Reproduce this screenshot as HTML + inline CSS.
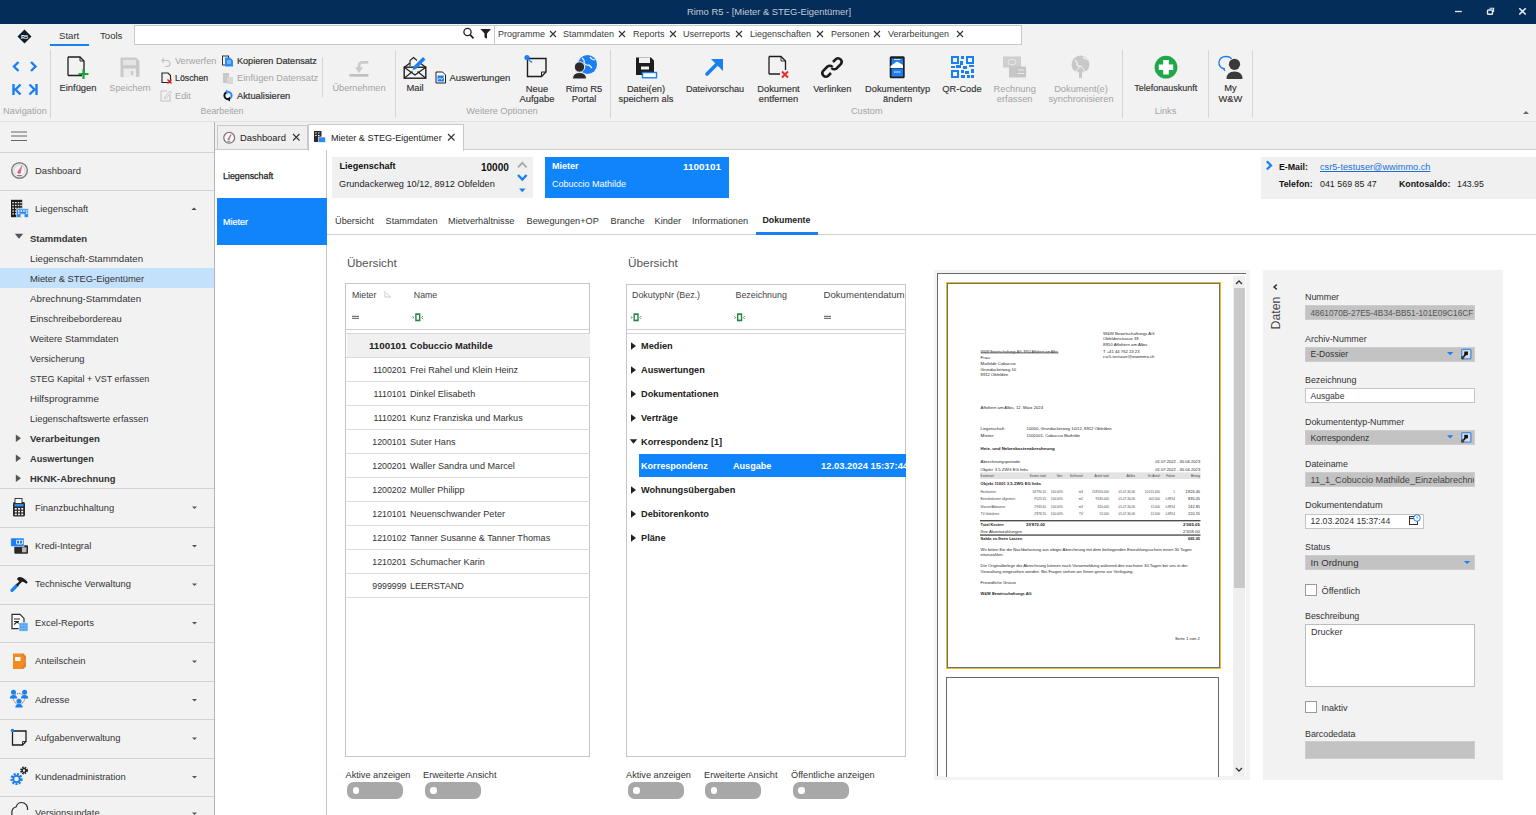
<!DOCTYPE html>
<html><head><meta charset="utf-8">
<style>
html,body{margin:0;padding:0;width:1536px;height:815px;overflow:hidden;background:#fff;}
body{font-family:"Liberation Sans",sans-serif;font-size:9.4px;color:#262626;position:relative;}
.a{position:absolute;}
.t{position:absolute;white-space:nowrap;line-height:12px;}
.b{font-weight:bold;}
.c{transform:translateX(-50%);text-align:center;}
.g{color:#a3a3a3;}
.vs{position:absolute;width:1px;background:#d6d6d6;}
.hs{position:absolute;height:1px;background:#d6d6d6;}
svg{position:absolute;overflow:visible;}
</style></head><body>
<!-- TITLE BAR -->
<div class="a" style="left:0;top:0;width:1536px;height:24px;background:#042d5a;"></div>
<div class="t" style="left:769px;top:6px;color:#c3cbd6;font-size:9.4px;transform:translateX(-50%);">Rimo R5 - [Mieter &amp; STEG-Eigentümer]</div>
<svg style="left:0;top:0" width="1" height="1">
 <line x1="1455" y1="11.5" x2="1461.8" y2="11.5" stroke="#e6eaf0" stroke-width="1.3"/>
 <rect x="1487.5" y="10" width="5" height="4.3" rx="0.8" fill="none" stroke="#e6eaf0" stroke-width="1.4"/>
 <path d="M1489.5 8.3 H1493.6 V12" fill="none" stroke="#e6eaf0" stroke-width="1.1"/>
 <path d="M1519.3 8.2 L1525.7 14.5 M1525.7 8.2 L1519.3 14.5" stroke="#eef1f5" stroke-width="1.6"/>
</svg>

<!-- RIBBON -->
<div class="a" style="left:0;top:24px;width:1536px;height:98px;background:#f2f2f2;"></div>
<div class="hs" style="left:0;top:121px;width:1536px;background:#e3e3e3;"></div>
<!-- logo -->
<svg style="left:17px;top:29px" width="15" height="15">
 <path d="M7.5 0.5 L14.5 7.5 L7.5 14.5 L0.5 7.5 Z" fill="#0d1b2a"/>
 <text x="7.5" y="10" font-family="Liberation Sans" font-size="5.6" font-weight="bold" fill="#fff" text-anchor="middle">R5</text>
</svg>
<div class="t" style="left:59px;top:30px;font-size:9.6px;color:#333;">Start</div>
<div class="a" style="left:50px;top:44px;width:39px;height:2px;background:#1a7ff0;"></div>
<div class="t" style="left:100px;top:30px;font-size:9.6px;color:#333;">Tools</div>
<!-- search box -->
<div class="a" style="left:134px;top:24.5px;width:888px;height:20.3px;background:#fff;border:1px solid #c9c9c9;box-sizing:border-box;"></div>
<svg style="left:462px;top:27px" width="40" height="14">
 <circle cx="5.5" cy="5" r="3.6" fill="none" stroke="#222" stroke-width="1.3"/>
 <path d="M8 7.7 L11.5 11.3" stroke="#222" stroke-width="1.8"/>
 <path d="M18.5 2 H29 L25 6.5 V11.5 L22.5 10.5 V6.5 Z" fill="#222"/>
 <line x1="32.5" y1="-2" x2="32.5" y2="17" stroke="#c9c9c9" stroke-width="1"/>
</svg>
<div class="t" style="left:498px;top:28px;font-size:9px;color:#3a3a3a;word-spacing:0;">Programme</div>
<div class="t" style="left:563px;top:28px;font-size:9px;color:#3a3a3a;">Stammdaten</div>
<div class="t" style="left:633px;top:28px;font-size:9px;color:#3a3a3a;">Reports</div>
<div class="t" style="left:683px;top:28px;font-size:9px;color:#3a3a3a;">Userreports</div>
<div class="t" style="left:750px;top:28px;font-size:9px;color:#3a3a3a;">Liegenschaften</div>
<div class="t" style="left:831px;top:28px;font-size:9px;color:#3a3a3a;">Personen</div>
<div class="t" style="left:888px;top:28px;font-size:9px;color:#3a3a3a;">Verarbeitungen</div>
<svg style="left:0;top:0" width="1" height="1">
 <g stroke="#333" stroke-width="1.1">
  <path d="M550 31 L556 37 M556 31 L550 37"/>
  <path d="M619 31 L625 37 M625 31 L619 37"/>
  <path d="M670 31 L676 37 M676 31 L670 37"/>
  <path d="M736 31 L742 37 M742 31 L736 37"/>
  <path d="M817 31 L823 37 M823 31 L817 37"/>
  <path d="M874 31 L880 37 M880 31 L874 37"/>
  <path d="M957 31 L963 37 M963 31 L957 37"/>
 </g>
</svg>

<!-- separators -->
<div class="vs" style="left:50px;top:50px;height:68px;"></div>
<div class="vs" style="left:322px;top:57px;height:40px;"></div>
<div class="vs" style="left:395px;top:50px;height:68px;"></div>
<div class="vs" style="left:610px;top:50px;height:68px;"></div>
<div class="vs" style="left:1122px;top:50px;height:68px;"></div>
<div class="vs" style="left:1208px;top:50px;height:68px;"></div>
<div class="vs" style="left:1252px;top:50px;height:68px;"></div>

<!-- Navigation -->
<svg style="left:0;top:0" width="1" height="1">
 <g fill="none" stroke="#1a7ff0" stroke-width="2.4" stroke-linejoin="miter">
  <path d="M18.5 62 L14 66.5 L18.5 71"/>
  <path d="M31 62 L35.5 66.5 L31 71"/>
  <path d="M13.5 84 V95 M20.5 84.5 L15.5 89.5 L20.5 94.5"/>
  <path d="M36.5 84 V95 M29.5 84.5 L34.5 89.5 L29.5 94.5"/>
 </g>
</svg>
<div class="t g" style="left:25px;top:105px;font-size:9.3px;transform:translateX(-50%);">Navigation</div>

<!-- Einfügen / Speichern -->
<svg style="left:0;top:0" width="1" height="1">
 <path d="M68 57 H80 L84 61 V74 M82 75.5 H68 Z" fill="none" stroke="#1e1e1e" stroke-width="1.3"/>
 <path d="M68 57 V75.5" stroke="#1e1e1e" stroke-width="1.3"/>
 <path d="M80 57 V61 H84" fill="none" stroke="#1e1e1e" stroke-width="1"/>
 <path d="M83.5 69 V79 M78.5 74 H88.5" stroke="#1ea03a" stroke-width="2.2"/>
 <path d="M120.5 57.5 H136 L139.5 61 V77 H120.5 Z" fill="#c9c9c9"/>
 <rect x="123" y="59.8" width="13" height="5.5" fill="#e4e4e4"/>
 <rect x="123.5" y="68.5" width="12.5" height="8.5" fill="#ececec"/>
 <rect x="131" y="71" width="2.2" height="4" fill="#c9c9c9"/>
</svg>
<div class="t" style="left:78px;top:82px;font-size:9.4px;color:#333;-webkit-text-stroke:0.15px #333;transform:translateX(-50%);">Einfügen</div>
<div class="t g" style="left:130px;top:82px;font-size:9.2px;transform:translateX(-50%);">Speichern</div>

<!-- small buttons -->
<svg style="left:0;top:0" width="1" height="1">
 <path d="M164 58 L162 60.5 L164 63 M162 60.5 H167 A3 3 0 0 1 167 66.5 H165" fill="none" stroke="#c0c0c0" stroke-width="1.1"/>
 <path d="M162 73 H168 L170.5 75.5 V82.5 H162 Z" fill="none" stroke="#222" stroke-width="1.1"/>
 <path d="M167.5 79.5 L171.5 83.5 M171.5 79.5 L167.5 83.5" stroke="#e02020" stroke-width="1.4"/>
 <path d="M161 91 H167 M161 91 V101 H170 V95" fill="none" stroke="#c6c6c6" stroke-width="1.1"/>
 <path d="M164 98 L170 91 L171.5 92.5 L165.5 99 Z" fill="none" stroke="#c6c6c6" stroke-width="1"/>
 <rect x="222.5" y="56" width="6" height="9" fill="none" stroke="#333" stroke-width="1"/>
 <path d="M225 57.5 H230 L233 60.5 V66.5 H225 Z" fill="#2a8cf0"/>
 <path d="M227 61 H231 M227 63 H231" stroke="#fff" stroke-width="0.7"/>
 <rect x="223" y="73" width="6" height="10" fill="#c8c8c8"/>
 <rect x="227" y="77" width="6" height="7" fill="#d8d8d8"/>
 <path d="M228 92 A3.6 3.6 0 0 1 228 99.2" fill="none" stroke="#2a8cf0" stroke-width="2"/>
 <path d="M228 99.2 A3.6 3.6 0 0 1 228 92" fill="none" stroke="#111" stroke-width="2"/>
 <path d="M226 89.6 L229.5 92 L226 94.4 Z" fill="#2a8cf0"/>
 <path d="M230 96.8 L226.5 99.2 L230 101.6 Z" fill="#111"/>
</svg>
<div class="t g" style="left:175px;top:54.5px;font-size:9.2px;">Verwerfen</div>
<div class="t" style="left:175px;top:72px;font-size:8.8px;color:#333;-webkit-text-stroke:0.2px #333;">Löschen</div>
<div class="t g" style="left:175px;top:89.5px;font-size:9.2px;">Edit</div>
<div class="t" style="left:237px;top:54.5px;font-size:9.1px;color:#333;-webkit-text-stroke:0.2px #333;">Kopieren Datensatz</div>
<div class="t g" style="left:237px;top:72px;font-size:9.3px;">Einfügen Datensatz</div>
<div class="t" style="left:237px;top:89.5px;font-size:9.3px;color:#333;-webkit-text-stroke:0.2px #333;">Aktualisieren</div>
<svg style="left:0;top:0" width="1" height="1">
 <path d="M368.3 62.3 H362.5 Q359 62.3 359 66.5 V68.5" fill="none" stroke="#cbcbcb" stroke-width="2.7"/>
 <path d="M355 67.3 H363 L359 73.3 Z" fill="#cbcbcb"/>
 <rect x="349.4" y="74" width="19" height="2.7" fill="#c0c0c0"/>
</svg>
<div class="t g" style="left:359px;top:82px;font-size:9.2px;transform:translateX(-50%);">Übernehmen</div>
<div class="t g" style="left:222px;top:105px;font-size:8.9px;transform:translateX(-50%);">Bearbeiten</div>
<!-- Weitere Optionen -->
<svg style="left:0;top:0" width="1" height="1">
 <!-- mail -->
 <path d="M404 67.5 L410 63 M426 67.5 L420 63" fill="none" stroke="#1e1e1e" stroke-width="1.2"/>
 <rect x="404.2" y="67.2" width="21.6" height="11" fill="none" stroke="#1e1e1e" stroke-width="1.4"/>
 <path d="M404.5 78 L412.5 71.5 M425.5 78 L417.5 71.5 M404.5 67.5 L415 75 L425.5 67.5" fill="none" stroke="#1e1e1e" stroke-width="1.1"/>
 <path d="M410 66 V60.5 L413.5 57.5 L417 60.5" fill="none" stroke="#1e1e1e" stroke-width="1.1"/>
 <path d="M413.5 66.5 L423 57 L425.5 59.5 L416 69 L412.5 70 Z" fill="#1a7ff0"/>
 <!-- auswertungen -->
 <path d="M436 72 H442.5 L445.5 75 V83 H436 Z" fill="#fff" stroke="#1e1e1e" stroke-width="1"/>
 <rect x="437.5" y="75.5" width="6.5" height="6" fill="#1a7ff0"/>
 <path d="M437.5 80 L440 78 L442 79.5 L444 77" stroke="#fff" stroke-width="0.8" fill="none"/>
 <!-- neue aufgabe -->
 <path d="M527.5 58.5 H546 V72 L541.5 76.5 H527.5 Z" fill="none" stroke="#1e1e1e" stroke-width="1.4"/>
 <path d="M541.5 76.5 V72 H546" fill="none" stroke="#1e1e1e" stroke-width="1"/>
 <circle cx="527" cy="57.5" r="2.6" fill="#1a7ff0"/>
 <path d="M528 59 L532 62.5" stroke="#1a7ff0" stroke-width="1.3"/>
 <!-- portal -->
 <circle cx="587.5" cy="64.5" r="9.5" fill="#1a7ff0"/>
 <path d="M582 58 Q585 60 584 63 Q586 66 589 65 L592 68 M590 57 Q592 60 595 60" fill="none" stroke="#fff" stroke-width="1.1"/>
 <circle cx="579.5" cy="67" r="5.2" fill="#2a2a2a" stroke="#f2f2f2" stroke-width="1"/>
 <path d="M572.5 79 Q572.5 72.5 579.5 72.5 Q586.5 72.5 586.5 79 Z" fill="#2a2a2a" stroke="#f2f2f2" stroke-width="1"/>
</svg>
<div class="t" style="left:415px;top:82px;font-size:9.4px;color:#333;-webkit-text-stroke:0.15px #333;transform:translateX(-50%);">Mail</div>
<div class="t" style="left:449.5px;top:72px;font-size:9.5px;color:#333;-webkit-text-stroke:0.15px #333;">Auswertungen</div>
<div class="t" style="left:537px;top:82.5px;font-size:9.4px;color:#333;-webkit-text-stroke:0.15px #333;transform:translateX(-50%);">Neue</div>
<div class="t" style="left:537px;top:92.5px;font-size:9.4px;color:#333;-webkit-text-stroke:0.15px #333;transform:translateX(-50%);">Aufgabe</div>
<div class="t" style="left:584px;top:82.5px;font-size:9.4px;color:#333;-webkit-text-stroke:0.15px #333;transform:translateX(-50%);">Rimo R5</div>
<div class="t" style="left:584px;top:92.5px;font-size:9.4px;color:#333;-webkit-text-stroke:0.15px #333;transform:translateX(-50%);">Portal</div>
<div class="t g" style="left:502px;top:105px;font-size:9.2px;transform:translateX(-50%);">Weitere Optionen</div>

<!-- Custom -->
<svg style="left:0;top:0" width="1" height="1">
 <!-- floppy -->
 <path d="M636 57.5 H651 L654 60.5 V75 H636 Z" fill="#1e1e1e"/>
 <rect x="639" y="57.5" width="11" height="5.5" fill="#f2f2f2"/>
 <rect x="641" y="66.5" width="8" height="3" fill="#f2f2f2"/>
 <rect x="642.5" y="72.5" width="14" height="5.3" fill="#fff" stroke="#1a7ff0" stroke-width="1.4"/>
 <!-- arrow -->
 <path d="M707 74 L718 63" stroke="#1a7ff0" stroke-width="3.6" stroke-linecap="round"/>
 <path d="M711 59 H723 V71 Z" fill="#1a7ff0"/>
 <!-- doc x -->
 <path d="M769 56.5 H781 L785.5 61 V70 M780 74 H769 Z" fill="none" stroke="#1e1e1e" stroke-width="1.3"/>
 <path d="M769 56.5 V74" stroke="#1e1e1e" stroke-width="1.3"/>
 <path d="M781 56.5 V61 H785.5" fill="none" stroke="#1e1e1e" stroke-width="0.9"/>
 <path d="M782 71.5 L788 77.5 M788 71.5 L782 77.5" stroke="#e82a2a" stroke-width="2"/>
 <!-- chain -->
 <g fill="none" stroke="#1e1e1e" stroke-width="2.6">
  <path d="M833 62 L836 59 A3.6 3.6 0 0 1 841 64 L836.5 68.5 A3.6 3.6 0 0 1 831.5 68"/>
  <path d="M831 73 L828 76 A3.6 3.6 0 0 1 823 71 L827.5 66.5 A3.6 3.6 0 0 1 832.5 67"/>
 </g>
 <!-- dokumententyp -->
 <rect x="889.7" y="56.3" width="15" height="22" rx="1.5" fill="#1e1e1e"/>
 <rect x="891.5" y="58.5" width="11.5" height="8" fill="#1a7ff0"/>
 <rect x="891.5" y="68.5" width="11.5" height="8" fill="#1a7ff0"/>
 <path d="M894 59.5 H900.5 M894 72 H900.5" stroke="#fff" stroke-width="0.8"/>
 <path d="M890.5 66 L897 61.5 L903 65 L903 68 L890.5 68 Z" fill="#fff"/>
 <!-- qr -->
 <g fill="#1a7ff0">
  <path d="M951 56 h8 v8 h-8 z M953 58 v4 h4 v-4 z" fill-rule="evenodd"/>
  <path d="M966 56 h8 v8 h-8 z M968 58 v4 h4 v-4 z" fill-rule="evenodd"/>
  <path d="M951 70 h8 v8 h-8 z M953 72 v4 h4 v-4 z" fill-rule="evenodd"/>
  <rect x="961" y="56" width="3" height="3"/><rect x="960" y="61" width="3" height="4"/>
  <rect x="951" y="66" width="4" height="2"/><rect x="956" y="65" width="5" height="3"/><rect x="963" y="66" width="4" height="3"/><rect x="969" y="65" width="5" height="2"/>
  <rect x="961" y="70" width="3" height="3"/><rect x="965" y="71" width="4" height="3"/><rect x="971" y="69" width="3" height="4"/>
  <rect x="961" y="75" width="4" height="3"/><rect x="967" y="75" width="3" height="3"/><rect x="971" y="75" width="3" height="3"/>
 </g>
 <!-- rechnung gray -->
 <rect x="1003" y="56.5" width="18" height="11" fill="#cfcfcf"/>
 <rect x="1008" y="59.5" width="8" height="5" rx="2.5" fill="none" stroke="#e8e8e8" stroke-width="1"/>
 <rect x="1009" y="66.5" width="17" height="11" fill="#c6c6c6"/>
 <path d="M1018 70 H1024 M1018 73.5 H1024" stroke="#ececec" stroke-width="1.1"/>
 <!-- sync gray -->
 <circle cx="1080.5" cy="64.5" r="9" fill="#c8c8c8"/>
 <path d="M1075 60 Q1078 62 1077 65 Q1079 67 1082 66 M1083 57 Q1086 60 1088 59" fill="none" stroke="#f2f2f2" stroke-width="1.2"/>
 <path d="M1080.5 66 L1075 72 H1078.5 V78.5 H1082.5 V72 H1086 Z" fill="#c8c8c8" stroke="#f2f2f2" stroke-width="1"/>
</svg>
<div class="t" style="left:646px;top:82.5px;font-size:9.3px;color:#333;-webkit-text-stroke:0.15px #333;transform:translateX(-50%);">Datei(en)</div>
<div class="t" style="left:646px;top:92.5px;font-size:9.3px;color:#333;-webkit-text-stroke:0.15px #333;transform:translateX(-50%);">speichern als</div>
<div class="t" style="left:715px;top:82.5px;font-size:9.1px;color:#333;-webkit-text-stroke:0.15px #333;transform:translateX(-50%);">Dateivorschau</div>
<div class="t" style="left:778.5px;top:82.5px;font-size:9.3px;color:#333;-webkit-text-stroke:0.15px #333;transform:translateX(-50%);">Dokument</div>
<div class="t" style="left:778.5px;top:92.5px;font-size:9.3px;color:#333;-webkit-text-stroke:0.15px #333;transform:translateX(-50%);">entfernen</div>
<div class="t" style="left:832.3px;top:82.5px;font-size:9.3px;color:#333;-webkit-text-stroke:0.15px #333;transform:translateX(-50%);">Verlinken</div>
<div class="t" style="left:897.6px;top:82.5px;font-size:9.3px;color:#333;-webkit-text-stroke:0.15px #333;transform:translateX(-50%);">Dokumententyp</div>
<div class="t" style="left:897.6px;top:92.5px;font-size:9.3px;color:#333;-webkit-text-stroke:0.15px #333;transform:translateX(-50%);">ändern</div>
<div class="t" style="left:962px;top:82.5px;font-size:9.3px;color:#333;-webkit-text-stroke:0.15px #333;transform:translateX(-50%);">QR-Code</div>
<div class="t g" style="left:1014.7px;top:82.5px;font-size:9.3px;transform:translateX(-50%);">Rechnung</div>
<div class="t g" style="left:1014.7px;top:92.5px;font-size:9.3px;transform:translateX(-50%);">erfassen</div>
<div class="t g" style="left:1081px;top:82.5px;font-size:9.3px;transform:translateX(-50%);">Dokument(e)</div>
<div class="t g" style="left:1081px;top:92.5px;font-size:9.3px;transform:translateX(-50%);">synchronisieren</div>
<div class="t g" style="left:866.8px;top:105px;font-size:9.2px;transform:translateX(-50%);">Custom</div>

<!-- Links -->
<svg style="left:0;top:0" width="1" height="1">
 <circle cx="1166" cy="67.2" r="11.4" fill="#1fa84a"/>
 <path d="M1163.2 60 h5.6 v4.4 h4.4 v5.6 h-4.4 v4.4 h-5.6 v-4.4 h-4.4 v-5.6 h4.4 z" fill="#fff"/>
 <!-- my w&w -->
 <path d="M1225 69 Q1218.5 68 1219 62 Q1220 56.5 1226 56.5 Q1230.5 56.5 1231.5 59" fill="none" stroke="#1a7ff0" stroke-width="1.3"/>
 <path d="M1223 68 L1225 71" stroke="#1a7ff0" stroke-width="1.3"/>
 <circle cx="1234.5" cy="64.3" r="5.6" fill="#3a3a3a"/>
 <path d="M1226.5 79 Q1226.5 71.5 1234.5 71.5 Q1242.5 71.5 1242.5 79 Z" fill="#3a3a3a"/>
</svg>
<div class="t" style="left:1165.7px;top:82px;font-size:9px;color:#333;-webkit-text-stroke:0.15px #333;transform:translateX(-50%);">Telefonauskunft</div>
<div class="t g" style="left:1165.5px;top:105px;font-size:9.2px;transform:translateX(-50%);">Links</div>
<div class="t" style="left:1230.4px;top:82px;font-size:9.3px;color:#333;-webkit-text-stroke:0.15px #333;transform:translateX(-50%);">My</div>
<div class="t" style="left:1230.4px;top:92.5px;font-size:9.3px;color:#333;-webkit-text-stroke:0.15px #333;transform:translateX(-50%);">W&amp;W</div>
<svg style="left:1522px;top:110px" width="8" height="5"><path d="M1 4 L4 1 L7 4 Z" fill="#666"/></svg>
<!-- SIDEBAR -->
<div class="a" style="left:0;top:122px;width:214px;height:693px;background:#f2f2f2;"></div>
<div class="a" style="left:214px;top:122px;width:1.3px;height:693px;background:#b4b4b4;"></div>
<svg style="left:0;top:0" width="1" height="1">
 <path d="M11 132 H27 M11 136 H27 M11 140.5 H27" stroke="#666" stroke-width="1"/>
</svg>
<div class="hs" style="left:0;top:151.5px;width:214px;background:#d2d2d2;"></div>
<div class="hs" style="left:0;top:190px;width:214px;background:#d2d2d2;"></div>
<div class="hs" style="left:0;top:488px;width:214px;background:#d2d2d2;"></div>
<div class="hs" style="left:0;top:527px;width:214px;background:#d2d2d2;"></div>
<div class="hs" style="left:0;top:565px;width:214px;background:#d2d2d2;"></div>
<div class="hs" style="left:0;top:604px;width:214px;background:#d2d2d2;"></div>
<div class="hs" style="left:0;top:642px;width:214px;background:#d2d2d2;"></div>
<div class="hs" style="left:0;top:681px;width:214px;background:#d2d2d2;"></div>
<div class="hs" style="left:0;top:719px;width:214px;background:#d2d2d2;"></div>
<div class="hs" style="left:0;top:757.5px;width:214px;background:#d2d2d2;"></div>
<div class="hs" style="left:0;top:796px;width:214px;background:#d2d2d2;"></div>
<div class="a" style="left:0;top:268px;width:214px;height:20px;background:#c4e1fb;"></div>

<!-- sidebar icons -->
<svg style="left:0;top:0" width="1" height="1">
 <!-- gauge -->
 <circle cx="19.5" cy="170.5" r="7.8" fill="#f6f6f6" stroke="#808080" stroke-width="1.5"/>
 <circle cx="19.5" cy="170.5" r="5.6" fill="none" stroke="#c0c0c0" stroke-width="0.8"/>
 <path d="M17.6 171.6 L22.6 164.6 L20.6 173 Z" fill="#e0687a"/>
 <circle cx="19" cy="172.3" r="1.6" fill="#e0687a"/>
 <path d="M17.2 175.6 H21.8" stroke="#808080" stroke-width="1.2"/>
 <!-- building -->
 <rect x="11" y="199.8" width="11.2" height="17.4" fill="#1e1e1e"/>
 <g fill="#e8e8e8"><rect x="12.3" y="202" width="1.6" height="1.3"/><rect x="12.3" y="204.8" width="1.6" height="1.3"/><rect x="12.3" y="207.6" width="1.6" height="1.3"/><rect x="12.3" y="210.4" width="1.6" height="1.3"/><rect x="12.3" y="213.2" width="1.6" height="1.3"/><rect x="15" y="202" width="1.6" height="1.3"/><rect x="15" y="204.8" width="1.6" height="1.3"/><rect x="15" y="207.6" width="1.6" height="1.3"/><rect x="15" y="210.4" width="1.6" height="1.3"/><rect x="15" y="213.2" width="1.6" height="1.3"/><rect x="17.7" y="202" width="1.6" height="1.3"/><rect x="17.7" y="204.8" width="1.6" height="1.3"/><rect x="17.7" y="207.6" width="1.6" height="1.3"/><rect x="17.7" y="210.4" width="1.6" height="1.3"/><rect x="17.7" y="213.2" width="1.6" height="1.3"/><rect x="20.2" y="202" width="1.6" height="1.3"/><rect x="20.2" y="204.8" width="1.6" height="1.3"/><rect x="20.2" y="207.6" width="1.6" height="1.3"/><rect x="20.2" y="210.4" width="1.6" height="1.3"/><rect x="20.2" y="213.2" width="1.6" height="1.3"/></g>
 <rect x="20.8" y="214.2" width="3.4" height="3.5" fill="#f2f2f2"/><path d="M16.6 208.8 H28.4 V217.5 H24.2 V214.2 H20.8 V217.5 H16.6 Z" fill="#2a8cf0" stroke="#f2f2f2" stroke-width="0.7"/>
 <g fill="#fff"><rect x="18" y="210.3" width="1.6" height="1.4"/><rect x="20.6" y="210.3" width="1.6" height="1.4"/><rect x="23.2" y="210.3" width="1.6" height="1.4"/><rect x="25.8" y="210.3" width="1.6" height="1.4"/>
 <rect x="18" y="212.6" width="1.6" height="1.4"/><rect x="25.8" y="212.6" width="1.6" height="1.4"/></g>
 <!-- caret up -->
 <path d="M191.5 210 L194 207.5 L196.5 210 Z" fill="#444"/>
 <!-- triangles -->
 <path d="M14.8 233.8 H23.2 L19 238.8 Z" fill="#555"/>
 <path d="M15.8 434.4 L21 438.2 L15.8 442.0 Z" fill="#555"/>
 <path d="M15.8 454.4 L21 458.2 L15.8 462.0 Z" fill="#555"/>
 <path d="M15.8 474.4 L21 478.2 L15.8 482.0 Z" fill="#555"/>
 <!-- carets down -->
 <g fill="#555">
 <path d="M192 506.5 H197 L194.5 509 Z"/><path d="M192 545 H197 L194.5 547.5 Z"/><path d="M192 583.5 H197 L194.5 586 Z"/>
 <path d="M192 622 H197 L194.5 624.5 Z"/><path d="M192 660.5 H197 L194.5 663 Z"/><path d="M192 699 H197 L194.5 701.5 Z"/>
 <path d="M192 737.5 H197 L194.5 740 Z"/><path d="M192 776 H197 L194.5 778.5 Z"/><path d="M192 812.5 H197 L194.5 815 Z"/>
 </g>
 <!-- calculator -->
 <rect x="13" y="502" width="12" height="14.5" rx="1.5" fill="#2a2a2a"/>
 <rect x="15" y="498.5" width="7" height="5" fill="#fff" stroke="#2a2a2a" stroke-width="0.9"/>
 <rect x="14.5" y="504" width="9" height="2.5" fill="#2a8cf0"/>
 <g fill="#f2f2f2"><rect x="14.8" y="508" width="2" height="1.6"/><rect x="18" y="508" width="2" height="1.6"/><rect x="21.2" y="508" width="2" height="1.6"/>
 <rect x="14.8" y="510.8" width="2" height="1.6"/><rect x="18" y="510.8" width="2" height="1.6"/><rect x="21.2" y="510.8" width="2" height="1.6"/>
 <rect x="14.8" y="513.6" width="2" height="1.6"/><rect x="18" y="513.6" width="2" height="1.6"/><rect x="21.2" y="513.6" width="2" height="1.6"/></g>
 <!-- kredi -->
 <rect x="14.3" y="545.2" width="13.7" height="8.6" rx="1" fill="#2a2a2a"/>
 <rect x="22" y="547.3" width="4.5" height="5" fill="#bbb"/>
 <rect x="10.8" y="538" width="13.2" height="8.5" fill="#1a7ff0" stroke="#f2f2f2" stroke-width="0.6"/>
 <path d="M16.5 540.3 H22.5 V544 H16.5 Z M19.5 540.3 V544" fill="none" stroke="#fff" stroke-width="0.8"/>
 <!-- hammer -->
 <path d="M17.3 585 L12 590.3" stroke="#1a7ff0" stroke-width="3.3" stroke-linecap="round"/>
 <path d="M22 580.3 L16.8 585.5" stroke="#1e1e1e" stroke-width="2.3"/>
 <path d="M16.8 579 L18.8 577 Q23.5 576.8 27.8 582.3 L26.3 583.8 Q22.8 580.8 19.5 581.7 Z" fill="#1e1e1e"/>
 <!-- excel reports -->
 <path d="M12 614.4 H20 L24 618.4 V628.6 H12 Z" fill="#fff" stroke="#2a2a2a" stroke-width="1.2"/>
 <path d="M14 619 H20 M14 621.5 H19 M14 624.5 L17 622 L19 623.5" stroke="#2a2a2a" stroke-width="1.1" fill="none"/>
 <rect x="19" y="622.8" width="9" height="8.4" fill="#4da0f5" stroke="#f2f2f2" stroke-width="0.7"/>
 <path d="M19.5 625.6 H27.5 M19.5 628.4 H27.5 M22 623 V631 M25 623 V631" stroke="#8cc4fa" stroke-width="0.5"/>
 <!-- anteilschein -->
 <path d="M13 653.4 H23.5 L26 656 V666.5 L23.5 669 H13 Z" fill="#f58a1f"/>
 <rect x="15" y="657" width="5.5" height="4" rx="0.8" fill="#fff"/>
 <path d="M22.5 653.8 L25.5 659 M25.5 663 L22.5 668.5" stroke="#888" stroke-width="1"/>
 <!-- adresse -->
 <path d="M13.5 697 Q19 690 24.5 697 M13 698 Q14 703 18 704.5 M25 698 Q24 703 20 704.5" fill="none" stroke="#333" stroke-width="0.8" stroke-dasharray="1.3 1"/>
 <g fill="#1a7ff0">
  <circle cx="13.5" cy="692.3" r="2.5"/><circle cx="24.6" cy="692.3" r="2.5"/><circle cx="19" cy="701.3" r="2.5"/>
  <path d="M9.8 698.5 Q9.8 695 13.5 695 Q17.2 695 17.2 698.5 Z M20.9 698.5 Q20.9 695 24.6 695 Q28.3 695 28.3 698.5 Z M15.3 707.5 Q15.3 704 19 704 Q22.7 704 22.7 707.5 Z"/>
 </g>
 <!-- aufgaben -->
 <path d="M12.5 731 H26 V741.5 L22.5 745 H12.5 Z" fill="none" stroke="#1e1e1e" stroke-width="1.3"/>
 <path d="M22.5 745 V741.5 H26" fill="none" stroke="#1e1e1e" stroke-width="0.9"/>
 <circle cx="12.5" cy="730.5" r="1.8" fill="#1a7ff0"/>
 <!-- gears -->
 <circle cx="16.5" cy="779" r="4.8" fill="none" stroke="#1a7ff0" stroke-width="2.6" stroke-dasharray="2 1.2"/>
 <circle cx="16.5" cy="779" r="3.2" fill="none" stroke="#1a7ff0" stroke-width="1.8"/>
 <circle cx="24" cy="770.5" r="3" fill="none" stroke="#1e1e1e" stroke-width="1.8" stroke-dasharray="1.5 0.9"/>
 <circle cx="24" cy="770.5" r="1.8" fill="none" stroke="#1e1e1e" stroke-width="1.2"/>
 <!-- cloud -->
 <path d="M12 815 Q11 808 16 807 Q18 801 24 803 Q28 805 27.5 810" fill="none" stroke="#2a2a2a" stroke-width="1.2"/>
</svg>
<div class="t" style="left:35px;top:164.5px;font-size:9.4px;color:#333;">Dashboard</div>
<div class="t" style="left:35px;top:202.5px;font-size:9.4px;color:#333;">Liegenschaft</div>
<div class="t b" style="left:30px;top:232.5px;font-size:9.5px;color:#333;">Stammdaten</div>
<div class="t" style="left:30px;top:252.8px;font-size:9.7px;color:#333;">Liegenschaft-Stammdaten</div>
<div class="t" style="left:30px;top:272.8px;font-size:9.4px;color:#333;">Mieter &amp; STEG-Eigentümer</div>
<div class="t" style="left:30px;top:292.8px;font-size:9.75px;color:#333;">Abrechnung-Stammdaten</div>
<div class="t" style="left:30px;top:312.8px;font-size:9.4px;color:#333;">Einschreibebordereau</div>
<div class="t" style="left:30px;top:332.8px;font-size:9.45px;color:#333;">Weitere Stammdaten</div>
<div class="t" style="left:30px;top:352.8px;font-size:9.35px;color:#333;">Versicherung</div>
<div class="t" style="left:30px;top:372.8px;font-size:9.0px;color:#333;">STEG Kapital + VST erfassen</div>
<div class="t" style="left:30px;top:392.8px;font-size:9.75px;color:#333;">Hilfsprogramme</div>
<div class="t" style="left:30px;top:412.8px;font-size:9.3px;color:#333;">Liegenschaftswerte erfassen</div>
<div class="t b" style="left:30px;top:432.7px;font-size:9.6px;color:#333;">Verarbeitungen</div>
<div class="t b" style="left:30px;top:452.7px;font-size:9.2px;color:#333;">Auswertungen</div>
<div class="t b" style="left:30px;top:472.7px;font-size:9.4px;color:#333;">HKNK-Abrechnung</div>
<div class="t" style="left:35px;top:501.5px;font-size:9.4px;color:#333;">Finanzbuchhaltung</div>
<div class="t" style="left:35px;top:539.5px;font-size:9.4px;color:#333;">Kredi-Integral</div>
<div class="t" style="left:35px;top:578px;font-size:9.4px;color:#333;">Technische Verwaltung</div>
<div class="t" style="left:35px;top:616.5px;font-size:9.4px;color:#333;">Excel-Reports</div>
<div class="t" style="left:35px;top:655px;font-size:9.4px;color:#333;">Anteilschein</div>
<div class="t" style="left:35px;top:693.5px;font-size:9.4px;color:#333;">Adresse</div>
<div class="t" style="left:35px;top:732px;font-size:9.4px;color:#333;">Aufgabenverwaltung</div>
<div class="t" style="left:35px;top:770.5px;font-size:9.4px;color:#333;">Kundenadministration</div>
<div class="t" style="left:35px;top:807px;font-size:9.4px;color:#333;">Versionsupdate</div>
<!-- DOC TAB STRIP -->
<div class="a" style="left:215.3px;top:122px;width:1321px;height:27px;background:#f0f0f0;"></div>
<div class="hs" style="left:215.3px;top:149px;width:1321px;background:#cdcdcd;"></div>
<div class="a" style="left:217px;top:125px;width:91px;height:24.5px;background:#efefef;border:1px solid #c9c9c9;box-sizing:border-box;"></div>
<div class="a" style="left:307.5px;top:124.3px;width:154.5px;height:25.5px;background:#fff;border:1px solid #c9c9c9;border-bottom:none;"></div>
<svg style="left:0;top:0" width="1" height="1">
 <circle cx="229.2" cy="137.8" r="5.4" fill="#fff" stroke="#777" stroke-width="1.3"/>
 <path d="M228.5 139.3 L231 134.5" stroke="#e06070" stroke-width="1.5"/>
 <circle cx="228.5" cy="139.3" r="1" fill="#e06070"/>
 <path d="M227.3 141.3 H230.5" stroke="#777" stroke-width="0.9"/>
 <path d="M293 134 L299.5 140.5 M299.5 134 L293 140.5" stroke="#333" stroke-width="1.1"/>
 <rect x="314" y="131" width="7.5" height="11" fill="#2a2a2a"/>
 <g fill="#fff"><rect x="315.2" y="132.5" width="1.5" height="1"/><rect x="318" y="132.5" width="1.5" height="1"/><rect x="315.2" y="135" width="1.5" height="1"/><rect x="318" y="135" width="1.5" height="1"/></g>
 <rect x="318.5" y="137" width="7" height="5.5" fill="#2a8cf0" stroke="#fff" stroke-width="0.6"/>
 <path d="M448 134 L454.5 140.5 M454.5 134 L448 140.5" stroke="#333" stroke-width="1.1"/>
</svg>
<div class="t" style="left:240px;top:132px;font-size:9.4px;color:#222;">Dashboard</div>
<div class="t" style="left:331px;top:132px;font-size:9.1px;color:#222;">Mieter &amp; STEG-Eigentümer</div>

<!-- left nav column -->
<div class="a" style="left:326px;top:150px;width:1px;height:665px;background:#c6c6c6;"></div>
<div class="t" style="left:223px;top:169.5px;font-size:8.9px;color:#222;-webkit-text-stroke:0.25px #222;">Liegenschaft</div>
<div class="a" style="left:217px;top:197.7px;width:109.5px;height:47.8px;background:#0f84fb;"></div>
<div class="t" style="left:223px;top:215.5px;font-size:9px;color:#fff;-webkit-text-stroke:0.2px #fff;">Mieter</div>

<!-- header cards -->
<div class="a" style="left:331.7px;top:157px;width:200.9px;height:41.3px;background:#f0f0f0;"></div>
<div class="t b" style="left:339.5px;top:160px;font-size:9.1px;color:#111;">Liegenschaft</div>
<div class="t b" style="left:481px;top:161.8px;font-size:10px;color:#111;">10000</div>
<div class="t" style="left:339px;top:178px;font-size:9.2px;color:#222;">Grundackerweg 10/12, 8912 Obfelden</div>
<svg style="left:0;top:0" width="1" height="1">
 <path d="M518 167.3 L522.3 162.8 L526.6 167.3" fill="none" stroke="#a8a8a8" stroke-width="1.9"/>
 <path d="M518 175 L522.3 179.5 L526.6 175" fill="none" stroke="#1a7ff0" stroke-width="2.4"/>
 <path d="M519 188.6 H525.6 L522.3 192.3 Z" fill="#1a7ff0"/>
</svg>
<div class="a" style="left:545px;top:157px;width:184px;height:41px;background:#0f84fb;"></div>
<div class="t b" style="left:552px;top:160px;font-size:9px;color:#fff;">Mieter</div>
<div class="t b" style="left:683px;top:161px;font-size:9.9px;color:#fff;">1100101</div>
<div class="t" style="left:552px;top:178px;font-size:9px;color:#fff;">Cobuccio Mathilde</div>

<!-- info card right -->
<div class="a" style="left:1261px;top:157px;width:275px;height:41.5px;background:#f0f0f0;"></div>
<svg style="left:0;top:0" width="1" height="1">
 <path d="M1266.8 161.3 L1271 165.4 L1266.8 169.5" fill="none" stroke="#1a7ff0" stroke-width="2.2"/>
</svg>
<div class="t b" style="left:1279px;top:161px;font-size:8.8px;color:#111;">E-Mail:</div>
<div class="t" style="left:1320px;top:161px;font-size:9.2px;color:#1a6fd6;text-decoration:underline;">csr5-testuser@wwimmo.ch</div>
<div class="t b" style="left:1279px;top:178px;font-size:8.8px;color:#111;">Telefon:</div>
<div class="t" style="left:1320px;top:178px;font-size:8.9px;color:#222;">041 569 85 47</div>
<div class="t b" style="left:1399px;top:178px;font-size:8.8px;color:#111;">Kontosaldo:</div>
<div class="t" style="left:1457px;top:178px;font-size:8.8px;color:#222;">143.95</div>

<!-- detail tabs -->
<div class="hs" style="left:327px;top:234px;width:1209px;background:#d0d0d0;"></div>
<div class="t" style="left:335px;top:214.5px;font-size:9.2px;color:#333;">Übersicht</div>
<div class="t" style="left:385.5px;top:214.5px;font-size:9.2px;color:#333;">Stammdaten</div>
<div class="t" style="left:448px;top:214.5px;font-size:9.2px;color:#333;">Mietverhältnisse</div>
<div class="t" style="left:526.5px;top:214.5px;font-size:9.2px;color:#333;">Bewegungen+OP</div>
<div class="t" style="left:610.5px;top:214.5px;font-size:9.2px;color:#333;">Branche</div>
<div class="t" style="left:654.5px;top:214.5px;font-size:9.2px;color:#333;">Kinder</div>
<div class="t" style="left:692px;top:214.5px;font-size:9.2px;color:#333;">Informationen</div>
<div class="t b" style="left:762.5px;top:214px;font-size:8.8px;color:#222;">Dokumente</div>
<div class="a" style="left:756px;top:232px;width:62px;height:2.5px;background:#1a7ff0;"></div>
<!-- PANEL 1 -->
<div class="t" style="left:347px;top:255.5px;font-size:11.8px;line-height:14px;color:#555;">Übersicht</div>
<div class="a" style="left:345px;top:283px;width:245px;height:474px;border:1px solid #c6c6c6;box-sizing:border-box;"></div>
<div class="t" style="left:352px;top:289px;font-size:8.8px;color:#444;">Mieter</div>
<div class="t" style="left:413.8px;top:289px;font-size:8.8px;color:#444;">Name</div>
<svg style="left:0;top:0" width="1" height="1"><path d="M385 291 V297 H391 M386.5 293 L390 296.5" fill="none" stroke="#bbb" stroke-width="0.8"/><path d="M352 316.3 H359 M352 318.3 H359" stroke="#555" stroke-width="1"/><rect x="415.2" y="313.3" width="5.2" height="8" fill="#1f8a3c"/><rect x="416.6" y="315" width="2.4" height="4.6" fill="#fff"/><path d="M412.5 316.5 L414 317.5 L412.5 318.5 M423 316 L421.5 317.5 L423 319" fill="none" stroke="#555" stroke-width="0.7"/></svg>
<div class="hs" style="left:346px;top:329px;width:243.5px;background:#d0d0d0;"></div>
<div class="hs" style="left:346px;top:333px;width:243.5px;background:#d8d8d8;"></div>
<div class="a" style="left:346.5px;top:333.5px;width:243px;height:23.8px;background:#f0f0f0;"></div>
<div class="hs" style="left:346px;top:357.3px;width:243.5px;background:#dcdcdc;"></div>
<div class="t b" style="left:320px;width:86.5px;text-align:right;top:339.7px;font-size:9.8px;color:#222;">1100101</div>
<div class="t b" style="left:410px;top:339.7px;font-size:9.3px;color:#222;">Cobuccio Mathilde</div>
<div class="hs" style="left:346px;top:381.3px;width:243.5px;background:#dcdcdc;"></div>
<div class="t" style="left:320px;width:86.5px;text-align:right;top:363.7px;font-size:8.8px;color:#333;">1100201</div>
<div class="t" style="left:410px;top:363.7px;font-size:9.1px;color:#333;">Frei Rahel und Klein Heinz</div>
<div class="hs" style="left:346px;top:405.3px;width:243.5px;background:#dcdcdc;"></div>
<div class="t" style="left:320px;width:86.5px;text-align:right;top:387.7px;font-size:8.8px;color:#333;">1110101</div>
<div class="t" style="left:410px;top:387.7px;font-size:9.1px;color:#333;">Dinkel Elisabeth</div>
<div class="hs" style="left:346px;top:429.3px;width:243.5px;background:#dcdcdc;"></div>
<div class="t" style="left:320px;width:86.5px;text-align:right;top:411.7px;font-size:8.8px;color:#333;">1110201</div>
<div class="t" style="left:410px;top:411.7px;font-size:9.1px;color:#333;">Kunz Franziska und Markus</div>
<div class="hs" style="left:346px;top:453.3px;width:243.5px;background:#dcdcdc;"></div>
<div class="t" style="left:320px;width:86.5px;text-align:right;top:435.7px;font-size:8.8px;color:#333;">1200101</div>
<div class="t" style="left:410px;top:435.7px;font-size:9.1px;color:#333;">Suter Hans</div>
<div class="hs" style="left:346px;top:477.3px;width:243.5px;background:#dcdcdc;"></div>
<div class="t" style="left:320px;width:86.5px;text-align:right;top:459.7px;font-size:8.8px;color:#333;">1200201</div>
<div class="t" style="left:410px;top:459.7px;font-size:9.1px;color:#333;">Waller Sandra und Marcel</div>
<div class="hs" style="left:346px;top:501.3px;width:243.5px;background:#dcdcdc;"></div>
<div class="t" style="left:320px;width:86.5px;text-align:right;top:483.7px;font-size:8.8px;color:#333;">1200202</div>
<div class="t" style="left:410px;top:483.7px;font-size:9.1px;color:#333;">Müller Philipp</div>
<div class="hs" style="left:346px;top:525.3px;width:243.5px;background:#dcdcdc;"></div>
<div class="t" style="left:320px;width:86.5px;text-align:right;top:507.7px;font-size:8.8px;color:#333;">1210101</div>
<div class="t" style="left:410px;top:507.7px;font-size:9.1px;color:#333;">Neuenschwander Peter</div>
<div class="hs" style="left:346px;top:549.3px;width:243.5px;background:#dcdcdc;"></div>
<div class="t" style="left:320px;width:86.5px;text-align:right;top:531.7px;font-size:8.8px;color:#333;">1210102</div>
<div class="t" style="left:410px;top:531.7px;font-size:9.1px;color:#333;">Tanner Susanne &amp; Tanner Thomas</div>
<div class="hs" style="left:346px;top:573.3px;width:243.5px;background:#dcdcdc;"></div>
<div class="t" style="left:320px;width:86.5px;text-align:right;top:555.7px;font-size:8.8px;color:#333;">1210201</div>
<div class="t" style="left:410px;top:555.7px;font-size:9.1px;color:#333;">Schumacher Karin</div>
<div class="hs" style="left:346px;top:597.3px;width:243.5px;background:#dcdcdc;"></div>
<div class="t" style="left:320px;width:86.5px;text-align:right;top:579.7px;font-size:8.8px;color:#333;">9999999</div>
<div class="t" style="left:410px;top:579.7px;font-size:9.1px;color:#333;">LEERSTAND</div>
<div class="t" style="left:345.5px;top:769px;font-size:9.2px;color:#333;">Aktive anzeigen</div><div class="a" style="left:347px;top:782.4px;width:56px;height:16.4px;border-radius:6.5px;background:#a8a8a8;"></div><div class="a" style="left:352.5px;top:787.3px;width:6.5px;height:6.5px;border-radius:50%;background:#fff;"></div>
<div class="t" style="left:423px;top:769px;font-size:9.2px;color:#333;">Erweiterte Ansicht</div><div class="a" style="left:424.5px;top:782.4px;width:56px;height:16.4px;border-radius:6.5px;background:#a8a8a8;"></div><div class="a" style="left:430.0px;top:787.3px;width:6.5px;height:6.5px;border-radius:50%;background:#fff;"></div>
<!-- PANEL 2 -->
<div class="t" style="left:628px;top:255.5px;font-size:11.8px;line-height:14px;color:#555;">Übersicht</div>
<div class="a" style="left:625.7px;top:283.5px;width:280.5px;height:473.2px;border:1px solid #c6c6c6;box-sizing:border-box;"></div>
<div class="t" style="left:632px;top:289px;font-size:8.9px;color:#444;">DokutypNr (Bez.)</div>
<div class="t" style="left:735.5px;top:289px;font-size:8.9px;color:#444;">Bezeichnung</div>
<div class="a" style="left:823.5px;top:289px;width:81.5px;height:12px;overflow:hidden;"><div class="t" style="left:0;top:0;font-size:9.6px;color:#444;">Dokumentendatum</div></div>
<svg style="left:0;top:0" width="1" height="1"><rect x="633.5" y="313.3" width="5.2" height="8" fill="#1f8a3c"/><rect x="634.9" y="315.0" width="2.4" height="4.6" fill="#fff"/><path d="M630.8 316.5 L632.3 317.5 L630.8 318.5 M641.3 316.0 L639.8 317.5 L641.3 319.0" fill="none" stroke="#555" stroke-width="0.7"/><rect x="737" y="313.3" width="5.2" height="8" fill="#1f8a3c"/><rect x="738.4" y="315.0" width="2.4" height="4.6" fill="#fff"/><path d="M734.3 316.5 L735.8 317.5 L734.3 318.5 M744.8 316.0 L743.3 317.5 L744.8 319.0" fill="none" stroke="#555" stroke-width="0.7"/><path d="M824 316.3 H831 M824 318.3 H831" stroke="#555" stroke-width="1"/></svg>
<div class="hs" style="left:626.5px;top:329px;width:279px;background:#d0d0d0;"></div>
<div class="hs" style="left:626.5px;top:333px;width:279px;background:#d8d8d8;"></div>
<div class="t b" style="left:641px;top:340px;font-size:9.2px;color:#222;">Medien</div>
<div class="t b" style="left:641px;top:364px;font-size:9.2px;color:#222;">Auswertungen</div>
<div class="t b" style="left:641px;top:388px;font-size:9.2px;color:#222;">Dokumentationen</div>
<div class="t b" style="left:641px;top:412px;font-size:9.2px;color:#222;">Verträge</div>
<div class="t b" style="left:641px;top:436px;font-size:9.2px;color:#222;">Korrespondenz [1]</div>
<div class="a" style="left:639.4px;top:454px;width:266.6px;height:23.4px;background:#0f84fb;"></div>
<div class="t b" style="left:641px;top:460px;font-size:9.1px;color:#fff;">Korrespondenz</div>
<div class="t b" style="left:733px;top:460px;font-size:9.1px;color:#fff;">Ausgabe</div>
<div class="a" style="left:821px;top:460px;width:84.5px;height:12px;overflow:hidden;"><div class="t b" style="left:0;top:0;font-size:9.4px;color:#fff;">12.03.2024 15:37:44</div></div>
<div class="t b" style="left:641px;top:484px;font-size:9.2px;color:#222;">Wohnungsübergaben</div>
<div class="t b" style="left:641px;top:508px;font-size:9.2px;color:#222;">Debitorenkonto</div>
<div class="t b" style="left:641px;top:532px;font-size:9.2px;color:#222;">Pläne</div>
<svg style="left:0;top:0" width="1" height="1"><path d="M631 342.2 L636 346.0 L631 349.8 Z" fill="#222"/><path d="M631 366.2 L636 370.0 L631 373.8 Z" fill="#222"/><path d="M631 390.2 L636 394.0 L631 397.8 Z" fill="#222"/><path d="M631 414.2 L636 418.0 L631 421.8 Z" fill="#222"/><path d="M629.8 439.3 H637.2 L633.5 443.8 Z" fill="#222"/><path d="M631 486.2 L636 490.0 L631 493.8 Z" fill="#222"/><path d="M631 510.2 L636 514.0 L631 517.8 Z" fill="#222"/><path d="M631 534.2 L636 538.0 L631 541.8 Z" fill="#222"/></svg>
<div class="t" style="left:626px;top:769px;font-size:9.2px;color:#333;">Aktive anzeigen</div><div class="a" style="left:627.5px;top:782.4px;width:56px;height:16.4px;border-radius:6.5px;background:#a8a8a8;"></div><div class="a" style="left:633.0px;top:787.3px;width:6.5px;height:6.5px;border-radius:50%;background:#fff;"></div>
<div class="t" style="left:704px;top:769px;font-size:9.2px;color:#333;">Erweiterte Ansicht</div><div class="a" style="left:705px;top:782.4px;width:56px;height:16.4px;border-radius:6.5px;background:#a8a8a8;"></div><div class="a" style="left:710.5px;top:787.3px;width:6.5px;height:6.5px;border-radius:50%;background:#fff;"></div>
<div class="t" style="left:791px;top:769px;font-size:9.2px;color:#333;">Öffentliche anzeigen</div><div class="a" style="left:792.6px;top:782.4px;width:56px;height:16.4px;border-radius:6.5px;background:#a8a8a8;"></div><div class="a" style="left:798.1px;top:787.3px;width:6.5px;height:6.5px;border-radius:50%;background:#fff;"></div>
<!-- PREVIEW -->
<div class="a" style="left:934px;top:269.8px;width:316px;height:510.5px;background:#f3f3f3;"></div>
<div class="a" style="left:937px;top:273.3px;width:309px;height:503px;background:#fff;border-top:1.6px solid #6a6a6a;border-left:1.6px solid #6a6a6a;box-sizing:border-box;"></div>
<div class="a" style="left:1233px;top:276px;width:12px;height:500px;background:#efefef;"></div>
<div class="a" style="left:1233.5px;top:288px;width:11.5px;height:299.5px;background:#c9c9c9;"></div>
<svg style="left:0;top:0" width="1" height="1"><path d="M1236 284 L1239 281 L1242 284" fill="none" stroke="#333" stroke-width="1.3"/><path d="M1236 768 L1239 771 L1242 768" fill="none" stroke="#333" stroke-width="1.3"/></svg>
<div class="a" style="left:945.5px;top:281.5px;width:275.5px;height:387.5px;background:#f0bc1c;"></div>
<div class="a" style="left:946.8px;top:282.8px;width:272.9px;height:384.9px;background:#6b6f7a;"></div>
<div class="a" style="left:947.5px;top:283.5px;width:271.5px;height:383.5px;background:#fff;"></div>
<div class="a" style="left:946px;top:676.5px;width:273px;height:100px;background:#fff;border:1.2px solid #6a6a6a;border-bottom:none;box-sizing:border-box;"></div>
<svg style="left:0;top:0" width="1" height="1"><g font-family="Liberation Sans" fill="#262626"><text x="980.6" y="352.7" font-size="3.9" textLength="77.6" lengthAdjust="spacingAndGlyphs">W&amp;W Bewirtschaftungs AG, 8910 Affoltern am Albis</text><rect x="980.6" y="352.6" width="77.6" height="0.7" fill="#333"/><text x="980.6" y="359.2" font-size="3.9" textLength="9" lengthAdjust="spacingAndGlyphs">Frau</text><text x="980.6" y="364.8" font-size="3.9" textLength="35" lengthAdjust="spacingAndGlyphs">Mathilde Cobuccio</text><text x="980.6" y="370.5" font-size="3.9" textLength="35.5" lengthAdjust="spacingAndGlyphs">Grundackerweg 10</text><text x="980.6" y="376.0" font-size="3.9" textLength="27.5" lengthAdjust="spacingAndGlyphs">8912 Obfelden</text><text x="1103" y="335.2" font-size="3.9" textLength="51.5" lengthAdjust="spacingAndGlyphs">W&amp;W Bewirtschaftungs AG</text><text x="1103" y="340.0" font-size="3.9" textLength="35.5" lengthAdjust="spacingAndGlyphs">Obfeldenstrasse 39</text><text x="1103" y="345.6" font-size="3.9" textLength="44.5" lengthAdjust="spacingAndGlyphs">8910 Affoltern am Albis</text><text x="1103" y="352.8" font-size="3.9" textLength="36.5" lengthAdjust="spacingAndGlyphs">T +41 44 762 23 23</text><text x="1103" y="358.4" font-size="3.9" textLength="51.5" lengthAdjust="spacingAndGlyphs">csr5-testuser@wwimmo.ch</text><text x="980.6" y="408.9" font-size="3.9" textLength="62.5" lengthAdjust="spacingAndGlyphs">Affoltern am Albis, 12. März 2024</text><text x="980.6" y="429.7" font-size="3.9" textLength="24.5" lengthAdjust="spacingAndGlyphs">Liegenschaft:</text><text x="1026.6" y="429.7" font-size="3.9" textLength="85" lengthAdjust="spacingAndGlyphs">10000, Grundackerweg 10/12, 8912 Obfelden</text><text x="980.6" y="436.9" font-size="3.9" textLength="14" lengthAdjust="spacingAndGlyphs">Mieter:</text><text x="1026.6" y="436.9" font-size="3.9" textLength="53.5" lengthAdjust="spacingAndGlyphs">1100101, Cobuccio Mathilde</text><text x="980.6" y="450.4" font-size="3.9" font-weight="bold" textLength="74" lengthAdjust="spacingAndGlyphs" fill="#222">Heiz- und Nebenkostenabrechnung</text><text x="980.6" y="463.2" font-size="3.9" textLength="39.5" lengthAdjust="spacingAndGlyphs">Abrechnungsperiode</text><text x="1155.2" y="463.2" font-size="3.9" textLength="45" lengthAdjust="spacingAndGlyphs">01.07.2022 - 30.06.2023</text><text x="980.6" y="470.6" font-size="3.9" textLength="47.5" lengthAdjust="spacingAndGlyphs">Objekt: 3.5-ZWG EG links</text><text x="1155.2" y="470.6" font-size="3.9" textLength="45" lengthAdjust="spacingAndGlyphs">01.07.2022 - 30.04.2023</text><rect x="980" y="472.4" width="220.5" height="6.6" fill="#e2e2e2"/><text x="980.6" y="477.1" font-size="3.1" fill="#444">Kostenart</text><text x="1046" y="477.1" font-size="3.1" text-anchor="end" fill="#444">Kosten total</text><text x="1063" y="477.1" font-size="3.1" text-anchor="end" fill="#444">Verr.</text><text x="1083" y="477.1" font-size="3.1" text-anchor="end" fill="#444">Schlüssel</text><text x="1109" y="477.1" font-size="3.1" text-anchor="end" fill="#444">Anteil total</text><text x="1135" y="477.1" font-size="3.1" text-anchor="end" fill="#444">Ab/bis</text><text x="1160" y="477.1" font-size="3.1" text-anchor="end" fill="#444">Ihr Anteil</text><text x="1175" y="477.1" font-size="3.1" text-anchor="end" fill="#444">Faktor</text><text x="1200" y="477.1" font-size="3.1" text-anchor="end" fill="#444">Betrag</text><text x="980.6" y="484.9" font-size="3.9" font-weight="bold" textLength="60.5" lengthAdjust="spacingAndGlyphs" fill="#222">Objekt 11001 3.5-ZWG EG links</text><text x="980.6" y="493.2" font-size="3.1" fill="#444">Heizkosten</text><text x="1046" y="493.2" font-size="3.1" text-anchor="end" fill="#444">34'790.10</text><text x="1063" y="493.2" font-size="3.1" text-anchor="end" fill="#444">100.00%</text><text x="1083" y="493.2" font-size="3.1" text-anchor="end" fill="#444">m3</text><text x="1109" y="493.2" font-size="3.1" text-anchor="end" fill="#444">218'320.000</text><text x="1135" y="493.2" font-size="3.1" text-anchor="end" fill="#444">01.07-30.06</text><text x="1160" y="493.2" font-size="3.1" text-anchor="end" fill="#444">10'015.400</text><text x="1175" y="493.2" font-size="3.1" text-anchor="end" fill="#444">1</text><text x="1200" y="493.2" font-size="3.9" text-anchor="end">1'826.40</text><text x="980.6" y="500.4" font-size="3.1" fill="#444">Betriebskosten allgemein</text><text x="1046" y="500.4" font-size="3.1" text-anchor="end" fill="#444">9'525.55</text><text x="1063" y="500.4" font-size="3.1" text-anchor="end" fill="#444">100.00%</text><text x="1083" y="500.4" font-size="3.1" text-anchor="end" fill="#444">m2</text><text x="1109" y="500.4" font-size="3.1" text-anchor="end" fill="#444">9'430.000</text><text x="1135" y="500.4" font-size="3.1" text-anchor="end" fill="#444">01.07-30.06</text><text x="1160" y="500.4" font-size="3.1" text-anchor="end" fill="#444">402.000</text><text x="1175" y="500.4" font-size="3.1" text-anchor="end" fill="#444">0.8914</text><text x="1200" y="500.4" font-size="3.9" text-anchor="end">835.05</text><text x="980.6" y="507.6" font-size="3.1" fill="#444">Wasser/Abwasser</text><text x="1046" y="507.6" font-size="3.1" text-anchor="end" fill="#444">2'943.40</text><text x="1063" y="507.6" font-size="3.1" text-anchor="end" fill="#444">100.00%</text><text x="1083" y="507.6" font-size="3.1" text-anchor="end" fill="#444">m3</text><text x="1109" y="507.6" font-size="3.1" text-anchor="end" fill="#444">620.000</text><text x="1135" y="507.6" font-size="3.1" text-anchor="end" fill="#444">01.07-30.06</text><text x="1160" y="507.6" font-size="3.1" text-anchor="end" fill="#444">12.000</text><text x="1175" y="507.6" font-size="3.1" text-anchor="end" fill="#444">0.8914</text><text x="1200" y="507.6" font-size="3.9" text-anchor="end">242.85</text><text x="980.6" y="514.8" font-size="3.1" fill="#444">TV-Gebühren</text><text x="1046" y="514.8" font-size="3.1" text-anchor="end" fill="#444">2'876.55</text><text x="1063" y="514.8" font-size="3.1" text-anchor="end" fill="#444">100.00%</text><text x="1083" y="514.8" font-size="3.1" text-anchor="end" fill="#444">TV</text><text x="1109" y="514.8" font-size="3.1" text-anchor="end" fill="#444">52.000</text><text x="1135" y="514.8" font-size="3.1" text-anchor="end" fill="#444">01.07-30.06</text><text x="1160" y="514.8" font-size="3.1" text-anchor="end" fill="#444">12.000</text><text x="1175" y="514.8" font-size="3.1" text-anchor="end" fill="#444">0.8914</text><text x="1200" y="514.8" font-size="3.9" text-anchor="end">220.15</text><rect x="980" y="520.2" width="220.5" height="1.1" fill="#222"/><text x="980.6" y="525.8" font-size="3.9" font-weight="bold" textLength="23" lengthAdjust="spacingAndGlyphs" fill="#222">Total Kosten</text><text x="1026" y="525.8" font-size="3.9" font-weight="bold" textLength="19" lengthAdjust="spacingAndGlyphs" fill="#222">29'870.00</text><text x="1200" y="525.8" font-size="3.9" font-weight="bold" textLength="17" lengthAdjust="spacingAndGlyphs" text-anchor="end" fill="#222">2'065.05</text><text x="980.6" y="533.0" font-size="3.9" textLength="41.5" lengthAdjust="spacingAndGlyphs">Ihre Akontozahlungen</text><text x="1200" y="533.0" font-size="3.9" textLength="17" lengthAdjust="spacingAndGlyphs" text-anchor="end">2'318.00</text><rect x="980" y="534.5" width="220.5" height="1.1" fill="#222"/><text x="980.6" y="540.1" font-size="3.9" font-weight="bold" textLength="41.5" lengthAdjust="spacingAndGlyphs" fill="#222">Saldo zu Ihren Lasten</text><text x="1200" y="540.1" font-size="3.9" font-weight="bold" textLength="12" lengthAdjust="spacingAndGlyphs" text-anchor="end" fill="#222">665.05</text><text x="980.6" y="550.6" font-size="3.9" textLength="211" lengthAdjust="spacingAndGlyphs">Wir bitten Sie die Nachbelastung aus obiger Abrechnung mit dem beiliegenden Einzahlungsschein innert 30 Tagen</text><text x="980.6" y="556.2" font-size="3.9" textLength="23" lengthAdjust="spacingAndGlyphs">einzuzahlen.</text><text x="980.6" y="567.4" font-size="3.9" textLength="207" lengthAdjust="spacingAndGlyphs">Die Originalbelege der Abrechnung können nach Voranmeldung während den nächsten 30 Tagen bei uns in der</text><text x="980.6" y="573.2" font-size="3.9" textLength="153" lengthAdjust="spacingAndGlyphs">Verwaltung eingesehen werden. Bei Fragen stehen wir Ihnen gerne zur Verfügung.</text><text x="980.6" y="584.1" font-size="3.9" textLength="35.5" lengthAdjust="spacingAndGlyphs">Freundliche Grüsse</text><text x="980.6" y="594.7" font-size="3.9" font-weight="bold" textLength="51" lengthAdjust="spacingAndGlyphs" fill="#222">W&amp;W Bewirtschaftungs AG</text><text x="1175" y="640.4" font-size="3.9" textLength="25" lengthAdjust="spacingAndGlyphs">Seite 1 von 2</text></g></svg>
<!-- FORM PANEL -->
<div class="a" style="left:1262.8px;top:269.8px;width:240px;height:510.5px;background:#f2f2f2;"></div>
<svg style="left:0;top:0" width="1" height="1"><path d="M1276.8 284.6 L1274 287 L1276.8 289.4" fill="none" stroke="#333" stroke-width="1.4"/></svg>
<div class="t" style="left:1276px;top:313.3px;font-size:12.3px;line-height:12px;color:#444;transform:translate(-50%,-50%) rotate(-90deg);">Daten</div>
<div class="t" style="left:1305px;top:291.0px;font-size:8.9px;color:#333;">Nummer</div>
<div class="a" style="left:1305px;top:305px;width:170px;height:15.199999999999989px;background:#c3c3c3;border:1px solid #cdcdcd;box-sizing:border-box;overflow:hidden;"><div class="t" style="left:4.5px;top:0.6px;font-size:8.3px;color:#555;">4861070B-27E5-4B34-BB51-101E09C16CF</div></div>
<div class="t" style="left:1305px;top:332.9px;font-size:8.9px;color:#333;">Archiv-Nummer</div>
<div class="a" style="left:1305px;top:346.7px;width:170px;height:15.300000000000011px;background:#c3c3c3;border:1px solid #cdcdcd;box-sizing:border-box;overflow:hidden;"><div class="t" style="left:4.5px;top:0.7px;font-size:8.6px;color:#333;">E-Dossier</div></div>
<div class="t" style="left:1305px;top:374.4px;font-size:8.9px;color:#333;">Bezeichnung</div>
<div class="a" style="left:1305px;top:388.3px;width:170px;height:15.099999999999966px;background:#fff;border:1px solid #c4c4c4;box-sizing:border-box;overflow:hidden;"><div class="t" style="left:4.5px;top:0.5px;font-size:8.6px;color:#333;">Ausgabe</div></div>
<div class="t" style="left:1305px;top:415.7px;font-size:8.9px;color:#333;">Dokumententyp-Nummer</div>
<div class="a" style="left:1305px;top:430px;width:170px;height:15.199999999999989px;background:#c3c3c3;border:1px solid #cdcdcd;box-sizing:border-box;overflow:hidden;"><div class="t" style="left:4.5px;top:0.6px;font-size:8.7px;color:#333;">Korrespondenz</div></div>
<div class="t" style="left:1305px;top:457.5px;font-size:8.9px;color:#333;">Dateiname</div>
<div class="a" style="left:1305px;top:472px;width:170px;height:15.199999999999989px;background:#c3c3c3;border:1px solid #cdcdcd;box-sizing:border-box;overflow:hidden;"><div class="t" style="left:4.5px;top:0.6px;font-size:9.1px;color:#444;">11_1_Cobuccio Mathilde_Einzelabrechnung.pdf</div></div>
<div class="t" style="left:1305px;top:499.0px;font-size:9.2px;color:#333;">Dokumentendatum</div>
<div class="a" style="left:1305px;top:513.5px;width:119px;height:15.100000000000023px;background:#fff;border:1px solid #c4c4c4;box-sizing:border-box;overflow:hidden;"><div class="t" style="left:4.5px;top:0.6px;font-size:8.7px;color:#333;">12.03.2024 15:37:44</div></div>
<div class="t" style="left:1305px;top:540.7px;font-size:8.9px;color:#333;">Status</div>
<div class="a" style="left:1305px;top:555px;width:170px;height:14.8px;background:#c3c3c3;border:1px solid #cdcdcd;box-sizing:border-box;overflow:hidden;"><div class="t" style="left:4.5px;top:0.6px;font-size:9.6px;color:#333;">In Ordnung</div></div>
<div class="a" style="left:1304.5px;top:584.3px;width:12px;height:12px;background:#fff;border:1px solid #9a9a9a;box-sizing:border-box;"></div>
<div class="t" style="left:1321.5px;top:584.6px;font-size:9.2px;color:#333;">Öffentlich</div>
<div class="t" style="left:1305px;top:610.0px;font-size:8.9px;color:#333;">Beschreibung</div>
<div class="a" style="left:1305px;top:624px;width:170px;height:63px;background:#fff;border:1px solid #bdbdbd;box-sizing:border-box;"></div>
<div class="t" style="left:1311px;top:625.5px;font-size:9px;color:#333;">Drucker</div>
<div class="a" style="left:1304.5px;top:701.4px;width:12px;height:12px;background:#fff;border:1px solid #9a9a9a;box-sizing:border-box;"></div>
<div class="t" style="left:1321.5px;top:702px;font-size:9px;color:#333;">Inaktiv</div>
<div class="t" style="left:1305px;top:727.5px;font-size:8.9px;color:#333;">Barcodedata</div>
<div class="a" style="left:1305px;top:741px;width:170px;height:17.600000000000023px;background:#c3c3c3;border:1px solid #cdcdcd;box-sizing:border-box;overflow:hidden;"><div class="t" style="left:4.5px;top:1.8px;font-size:9.2px;color:#333;"></div></div>
<svg style="left:0;top:0" width="1" height="1"><path d="M1447 351.90000000000003 H1453.3 L1450.15 355.2 Z" fill="#1a7ff0"/><rect x="1461.7" y="349.3" width="9.2" height="9.6" rx="1" fill="#dcdcdc" stroke="#3b8ff0" stroke-width="1.3"/><rect x="1464.3" y="351.5" width="3.6" height="3.6" fill="#111"/><path d="M1462.8 357.5 L1465.5 354.6" stroke="#111" stroke-width="1.6"/><circle cx="1462.6" cy="357.7" r="1.7" fill="#444"/><path d="M1447 435.20000000000005 H1453.3 L1450.15 438.5 Z" fill="#1a7ff0"/><rect x="1461.7" y="432.6" width="9.2" height="9.6" rx="1" fill="#dcdcdc" stroke="#3b8ff0" stroke-width="1.3"/><rect x="1464.3" y="434.8" width="3.6" height="3.6" fill="#111"/><path d="M1462.8 440.8 L1465.5 437.9" stroke="#111" stroke-width="1.6"/><circle cx="1462.6" cy="441.0" r="1.7" fill="#444"/><path d="M1464 561 H1470.2 L1467.1 564 Z" fill="#1a7ff0"/><rect x="1409.5" y="516.5" width="8" height="8" fill="#fff" stroke="#333" stroke-width="1"/><path d="M1410 518.5 H1417" stroke="#333" stroke-width="1.2"/><circle cx="1417" cy="518" r="3.3" fill="#fff" stroke="#1a7ff0" stroke-width="1"/><path d="M1417 516.3 V518 H1418.3" fill="none" stroke="#1a7ff0" stroke-width="0.7"/></svg>
</body></html>
